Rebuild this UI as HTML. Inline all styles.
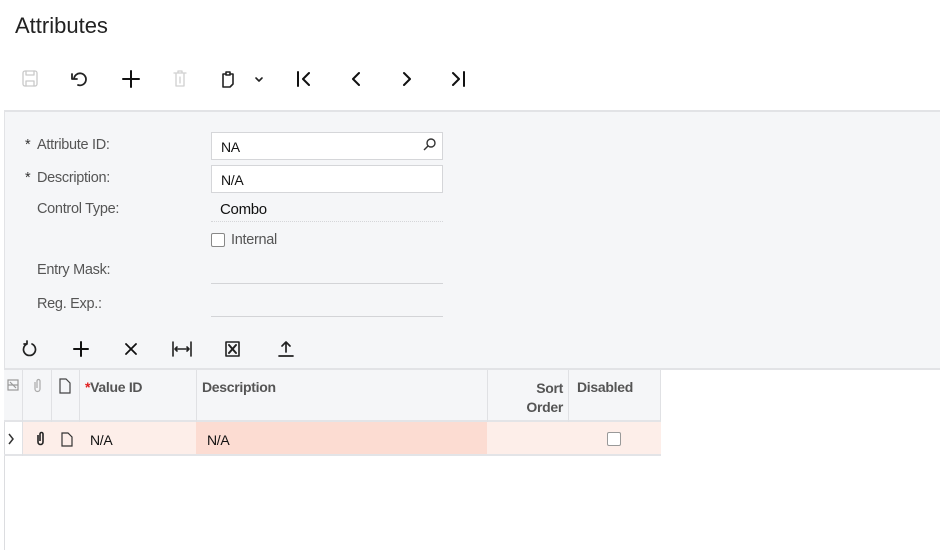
<!DOCTYPE html>
<html><head><style>
*{box-sizing:border-box;margin:0;padding:0}
body{width:940px;height:550px;background:#fff;font-family:"Liberation Sans",Arial,sans-serif;position:relative;overflow:hidden;color:#222}
.a{position:absolute}
.title{left:15px;top:13px;font-size:22px;color:#222}
.gray{left:4px;top:110px;width:936px;height:260px;background:#f5f6f8;border-top:2px solid #e2e3e6;border-bottom:2px solid #e2e3e6;border-left:1px solid #e2e3e6}
.lbl{font-size:14.5px;color:#555;letter-spacing:-0.3px}
.inp{background:#fff;border:1px solid #d5d6d9;width:232px;height:28px;font-size:14px;color:#111;padding:6px 9px;letter-spacing:-0.3px}
.line{border-bottom:1px solid #d3d4d7;width:232px}
.th{font-size:14px;color:#555;font-weight:bold;letter-spacing:-0.3px}
.vl{position:absolute;width:1px;background:#e0e1e4}
svg{position:absolute}
</style></head><body>
<div class="a title">Attributes</div>
<div class="a" style="left:4px;top:110px;width:1px;height:440px;background:#dcdde0"></div>
<!-- toolbar -->
<svg style="left:20px;top:68px" width="460" height="22" fill="none" stroke-linecap="round" stroke-linejoin="round">
 <g stroke="#c9c9c9" stroke-width="1.3"><rect x="3" y="3" width="14" height="15" rx="2"/><path d="M6 3v4h8V3M6 18v-5h8v5"/></g>
 <g stroke="#222" stroke-width="1.8"><path d="M54 11a6 6 0 1 1 4 6M52 6v5h5"/></g>
 <g stroke="#111" stroke-width="2"><path d="M111 3v16M103 11h16"/></g>
 <g stroke="#d0d0d0" stroke-width="1.3"><path d="M154 5h12M158 5V3h4v2M156 6v12h8V6M160 9v6"/></g>
 <g stroke="#222" stroke-width="1.6"><path d="M205 6h-2v13h7l3-3V6h-2M206 4h4v3h-4z"/><path d="M236 10l3 3 3-3"/></g>
 <g stroke="#111" stroke-width="2"><path d="M278 4v14M289 5l-6 6 6 6M339 5l-6 6 6 6M384 5l6 6-6 6M433 5l6 6-6 6M444 4v14"/></g>
</svg>
<div class="a gray"></div>
<div class="a lbl" style="left:25px;top:137px"><span style="color:#333">*</span></div><div class="a lbl" style="left:37px;top:137px">Attribute ID:</div>
<div class="a lbl" style="left:25px;top:170px"><span style="color:#333">*</span></div><div class="a lbl" style="left:37px;top:170px">Description:</div>
<div class="a lbl" style="left:37px;top:201px">Control Type:</div>
<div class="a lbl" style="left:37px;top:262px">Entry Mask:</div>
<div class="a lbl" style="left:37px;top:296px">Reg. Exp.:</div>
<div class="a inp" style="left:211px;top:132px">NA</div>
<svg style="left:422px;top:137px" width="16" height="16" fill="none" stroke="#333" stroke-width="1.4"><circle cx="9" cy="6" r="4"/><path d="M6 9l-4 4"/></svg>
<div class="a inp" style="left:211px;top:165px">N/A</div>
<div class="a" style="left:220px;top:201px;font-size:15px;color:#111;letter-spacing:-0.3px">Combo</div>
<div class="a" style="left:211px;top:221px;width:232px;border-bottom:1px dotted #d5d6d9"></div>
<div class="a" style="left:211px;top:233px;width:14px;height:14px;border:1px solid #888;border-radius:2px;background:#fff"></div>
<div class="a lbl" style="left:231px;top:232px">Internal</div>
<div class="a line" style="left:211px;top:283px"></div>
<div class="a line" style="left:211px;top:316px"></div>
<!-- grid toolbar -->
<svg style="left:20px;top:338px" width="290" height="22" fill="none" stroke-linecap="round" stroke-linejoin="round">
 <g stroke="#222" stroke-width="1.7"><path d="M7 6a6 6 0 1 0 5 0M7 3v3h-3"/></g>
 <g stroke="#111" stroke-width="2"><path d="M61 4v14M54 11h14"/></g>
 <g stroke="#111" stroke-width="1.8"><path d="M106 6l10 10M116 6l-10 10"/></g>
 <g stroke="#222" stroke-width="1.6"><path d="M153 4v14M171 4v14M155 11h14M157 9l-2 2 2 2M167 9l2 2-2 2"/></g>
 <g stroke="#222" stroke-width="1.6"><rect x="206" y="4" width="13" height="14"/><path d="M209 7l7 8M216 7l-7 8" stroke-width="2"/></g>
 <g stroke="#222" stroke-width="1.7"><path d="M266 14v-10M262 8l4-4 4 4M259 18h14"/></g>
</svg>
<!-- grid header -->
<div class="a" style="left:4px;top:370px;width:657px;height:52px;background:#f5f6f8;border-right:1px solid #e0e1e4;border-bottom:2px solid #e3e4e7"></div>
<div class="a" style="left:22px;top:422px;width:639px;height:34px;background:#fdeee9;border-bottom:2px solid #e3e4e7"></div>
<div class="a" style="left:4px;top:422px;width:18px;height:34px;border-bottom:2px solid #e3e4e7"></div>
<div class="a" style="left:196px;top:422px;width:291px;height:32px;background:#fcdcd2"></div>
<div class="vl" style="left:22px;top:370px;height:86px"></div>
<div class="vl" style="left:51px;top:370px;height:52px"></div>
<div class="vl" style="left:79px;top:370px;height:52px"></div>
<div class="vl" style="left:196px;top:370px;height:52px"></div>
<div class="vl" style="left:487px;top:370px;height:52px"></div>
<div class="vl" style="left:568px;top:370px;height:52px"></div>
<svg style="left:6px;top:378px" width="74" height="16" fill="none" stroke-width="1.2">
 <g stroke="#999"><rect x="2" y="2" width="10" height="10"/><path d="M2 7h10M4 4l6 6"/></g>
 <g stroke="#aaa"><path d="M29 4v7a2.5 2.5 0 0 0 5 0V3a1.5 1.5 0 0 0-3 0v7"/></g>
 <g stroke="#444"><path d="M54 1h6l4 4v10h-10z"/></g>
</svg>
<div class="a th" style="left:85px;top:379px"><span style="color:#e02020">*</span>Value ID</div>
<div class="a th" style="left:202px;top:379px">Description</div>
<div class="a th" style="left:487px;top:379px;width:76px;text-align:right;line-height:19px">Sort<br>Order</div>
<div class="a th" style="left:577px;top:379px">Disabled</div>
<svg style="left:6px;top:431px" width="74" height="16" fill="none">
 <path d="M3 3l4 5-4 5" stroke="#333" stroke-width="1.5"/>
 <path d="M32 4v7a2.5 2.5 0 0 0 5 0V3a1.5 1.5 0 0 0-3 0v7" stroke="#222" stroke-width="1.6"/>
 <path d="M56 2h6l4 4v9h-10z" stroke="#333" stroke-width="1.2"/>
</svg>
<div class="a" style="left:90px;top:432px;font-size:14px;color:#111;letter-spacing:-0.3px">N/A</div>
<div class="a" style="left:207px;top:432px;font-size:14px;color:#111;letter-spacing:-0.3px">N/A</div>
<div class="a" style="left:607px;top:432px;width:14px;height:14px;border:1px solid #999;border-radius:2px;background:#fff"></div>
</body></html>
